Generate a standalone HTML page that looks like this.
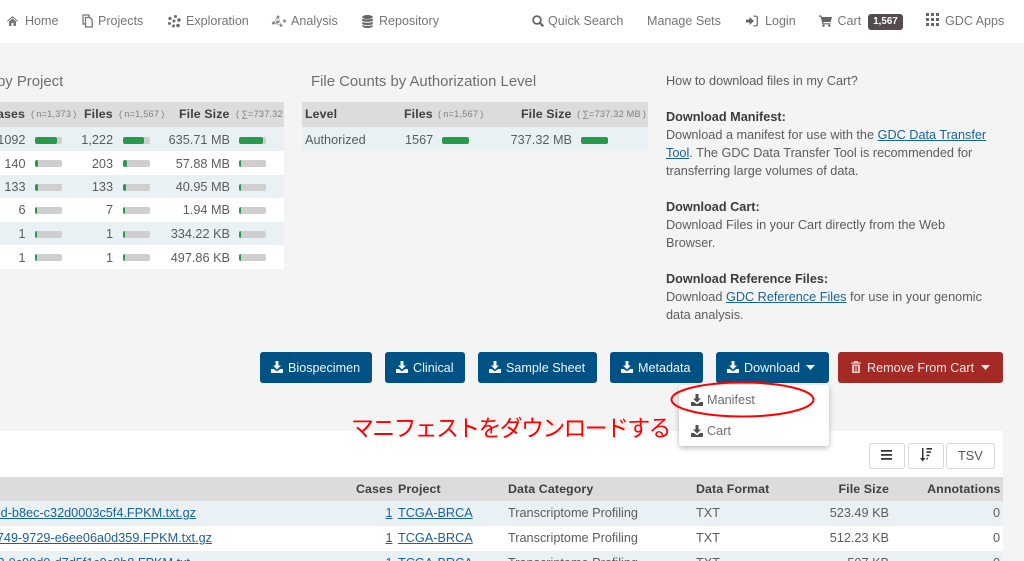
<!DOCTYPE html>
<html lang="ja"><head><meta charset="utf-8"><title>GDC Cart</title>
<style>
html,body{margin:0;padding:0;width:1024px;height:561px;overflow:hidden}
#w{position:relative;width:1024px;height:561px;overflow:hidden;background:#f4f4f4;font-family:"Liberation Sans","Noto Sans CJK JP",sans-serif;font-size:12.7px;color:#5c5c5c}
.b{position:absolute}
.t{position:absolute;white-space:nowrap;line-height:18px}
.n{color:#757575;font-size:12.55px;top:12px}
.h{font-weight:bold;color:#3f3f3f;font-size:12.4px;letter-spacing:.1px}
.s{font-size:9.2px;color:#808080;letter-spacing:.2px}
.R{text-align:right}
a{color:#1a6296;text-decoration:underline}
.bar{position:absolute;width:27px;height:7px;background:#cfcfcf;border-radius:2px;overflow:hidden}
.bar i{display:block;height:7px;background:#259b4b;border-radius:2px}
.btn{position:absolute;top:352px;height:31px;background:#005184;border-radius:3px}
.bl{position:absolute;top:358.5px;color:#f3f6f9;font-size:12.6px;line-height:18px;white-space:nowrap}
svg{position:absolute;overflow:visible}
.tb{position:absolute;top:443px;height:24px;background:#fff;border:1px solid #d8d8d8;border-radius:3px}
</style></head><body><div id="w">
<div class="b" style="left:205px;top:-6px;width:355px;height:6px;box-shadow:0 1px 4px rgba(0,0,0,.12)"></div>
<div class="b" style="left:0;top:0;width:1024px;height:43px;background:#fff"></div>

<svg style="left:7px;top:16px" width="11" height="10" viewBox="0 0 11 10" fill="#757575"><path d="M5.500 0 11 5l-.7.7L5.500 1.500.7 5.700 0 5zM2 5.500 5.500 2.500 9 5.500V10H6.500V7h-2v3H2z"/></svg>
<span class="t n" style="left:25px">Home</span>
<svg style="left:82px;top:14px" width="11" height="14" viewBox="0 0 11 14" fill="none" stroke="#757575" stroke-width="1.300"><path d="M7 3V1H1v9h2.500"/><path d="M3.500 3.500H8L10.200 6v7H3.500z"/></svg>
<span class="t n" style="left:98px">Projects</span>
<svg style="left:168px;top:15px" width="13" height="13" viewBox="0 0 13 13" fill="#6b6b6b"><circle cx="7.500" cy="1.500" r="1.500"/><circle cx="2" cy="3.500" r="1.600"/><circle cx="11" cy="5" r="1.800"/><circle cx="6" cy="6" r="1.500"/><circle cx="1.500" cy="8.500" r="1.500"/><circle cx="10" cy="10.500" r="1.800"/><circle cx="5.500" cy="11" r="1.500"/></svg>
<span class="t n" style="left:186px">Exploration</span>
<svg style="left:272px;top:15px" width="14" height="13" viewBox="0 0 14 13" fill="#777" stroke="#999" stroke-width=".7"><path d="M6 2 1.500 8 9 10.500 6 2z" fill="none"/><circle cx="6" cy="2" r="1.200"/><circle cx="1.500" cy="8" r="1.300"/><circle cx="9" cy="10.500" r="1.100"/><circle cx="12.500" cy="6" r="1.200"/><circle cx="5.500" cy="7" r="1.200"/></svg>
<span class="t n" style="left:291px">Analysis</span>
<svg style="left:362px;top:15px" width="11" height="13" viewBox="0 0 11 13" fill="#666"><ellipse cx="5.500" cy="2" rx="5.300" ry="2"/><path d="M.2 3.400c1 1.400 9.600 1.400 10.600 0v2.200c-1 1.600-9.600 1.600-10.600 0zM.2 6.700c1 1.400 9.600 1.400 10.600 0v2.200c-1 1.600-9.600 1.600-10.600 0zM.2 9.900c1 1.400 9.600 1.400 10.600 0v1.100c-1 2.700-9.600 2.700-10.600 0z"/></svg>
<span class="t n" style="left:379px">Repository</span>
<svg style="left:532px;top:15px" width="12" height="12" viewBox="0 0 12 12" fill="none" stroke="#666" stroke-width="1.800"><circle cx="5" cy="5" r="3.900"/><path d="M7.800 7.800 11.300 11.300" stroke-width="2.200"/></svg>
<span class="t n" style="left:548px">Quick Search</span>
<span class="t n" style="left:647px">Manage Sets</span>
<svg style="left:746px;top:15px" width="12" height="12" viewBox="0 0 12 12"><path d="M0 4.500h3.500V2L8 6l-4.500 4V7.500H0z" fill="#666"/><path d="M7.500 1.200H10a1.300 1.300 0 0 1 1.300 1.300v7A1.300 1.300 0 0 1 10 10.800H7.500" fill="none" stroke="#666" stroke-width="1.200"/></svg>
<span class="t n" style="left:765px">Login</span>
<svg style="left:819px;top:15px" width="13" height="12" viewBox="0 0 13 12" fill="#666"><path d="M0 .5h2.500l.4 1.500H13l-1.300 5H4.200l.3 1.200H11.500v1.200H3.400L1.700 1.700H0z"/><circle cx="4.500" cy="10.700" r="1.200"/><circle cx="10.300" cy="10.700" r="1.200"/></svg>
<span class="t n" style="left:837.500px">Cart</span>
<div class="b" style="left:868px;top:14px;width:35px;height:16px;background:#544c4c;border-radius:3px;color:#fff;font-size:9.800px;font-weight:bold;line-height:16px;text-align:center">1,567</div>
<svg style="left:926px;top:13px" width="13" height="13" viewBox="0 0 13 13" fill="#666"><path d="M0 0h3v3H0zM5 0h3v3H5zM10 0h3v3h-3zM0 5h3v3H0zM5 5h3v3H5zM10 5h3v3h-3zM0 10h3v3H0zM5 10h3v3H5zM10 10h3v3h-3z"/></svg>
<span class="t n" style="left:945px">GDC Apps</span>

<!-- left table -->
<span class="t" style="left:-3px;top:73px;font-size:14.900px;color:#6e6e6e">by Project</span>
<div class="b" style="left:0;top:102px;width:284px;height:25px;background:#dcdcdc;overflow:hidden">
<span class="t h" style="right:259px;top:3px">Cases</span>
<span class="t s" style="left:31px;top:3px">(&thinsp;n=1,373&thinsp;)</span>
<span class="t h" style="left:84px;top:3px">Files</span>
<span class="t s" style="left:119px;top:3px">(&thinsp;n=1,567&thinsp;)</span>
<span class="t h" style="left:179px;top:3px">File Size</span>
<span class="t s" style="left:236px;top:3px">(&thinsp;∑=737.32 MB&thinsp;)</span>
</div>
<div class="b" style="left:0;top:127px;width:284px;height:24px;background:#e9f1f5"></div>
<div class="b" style="left:0;top:151px;width:284px;height:24px;background:#fff"></div>
<div class="b" style="left:0;top:175px;width:284px;height:23px;background:#e9f1f5"></div>
<div class="b" style="left:0;top:198px;width:284px;height:24px;background:#fff"></div>
<div class="b" style="left:0;top:222px;width:284px;height:23px;background:#e9f1f5"></div>
<div class="b" style="left:0;top:245px;width:284px;height:24px;background:#fff"></div>

<span class="t R" style="right:998.500px;top:131px">1092</span>
<span class="t R" style="right:998.500px;top:155px">140</span>
<span class="t R" style="right:998.500px;top:178px">133</span>
<span class="t R" style="right:998.500px;top:201px">6</span>
<span class="t R" style="right:998.500px;top:225px">1</span>
<span class="t R" style="right:998.500px;top:249px">1</span>

<span class="t R" style="right:911px;top:131px">1,222</span>
<span class="t R" style="right:911px;top:155px">203</span>
<span class="t R" style="right:911px;top:178px">133</span>
<span class="t R" style="right:911px;top:201px">7</span>
<span class="t R" style="right:911px;top:225px">1</span>
<span class="t R" style="right:911px;top:249px">1</span>

<span class="t R" style="right:794px;top:131px">635.71 MB</span>
<span class="t R" style="right:794px;top:155px">57.88 MB</span>
<span class="t R" style="right:794px;top:178px">40.95 MB</span>
<span class="t R" style="right:794px;top:201px">1.94 MB</span>
<span class="t R" style="right:794px;top:225px">334.22 KB</span>
<span class="t R" style="right:794px;top:249px">497.86 KB</span>

<div class="bar" style="left:35px;top:136.500px"><i style="width:22px"></i></div>
<div class="bar" style="left:123px;top:136.500px"><i style="width:21px"></i></div>
<div class="bar" style="left:239px;top:136.500px"><i style="width:24px"></i></div>
<div class="bar" style="left:35px;top:160px"><i style="width:3px"></i></div>
<div class="bar" style="left:123px;top:160px"><i style="width:4px"></i></div>
<div class="bar" style="left:239px;top:160px"><i style="width:2px"></i></div>
<div class="bar" style="left:35px;top:184px"><i style="width:3px"></i></div>
<div class="bar" style="left:123px;top:184px"><i style="width:3px"></i></div>
<div class="bar" style="left:239px;top:184px"><i style="width:2px"></i></div>
<div class="bar" style="left:35px;top:207px"><i style="width:2px"></i></div>
<div class="bar" style="left:123px;top:207px"><i style="width:2px"></i></div>
<div class="bar" style="left:239px;top:207px"><i style="width:2px"></i></div>
<div class="bar" style="left:35px;top:231px"><i style="width:2px"></i></div>
<div class="bar" style="left:123px;top:231px"><i style="width:2px"></i></div>
<div class="bar" style="left:239px;top:231px"><i style="width:2px"></i></div>
<div class="bar" style="left:35px;top:254px"><i style="width:2px"></i></div>
<div class="bar" style="left:123px;top:254px"><i style="width:2px"></i></div>
<div class="bar" style="left:239px;top:254px"><i style="width:2px"></i></div>

<!-- middle table -->
<span class="t" style="left:311px;top:73px;font-size:14.900px;color:#6e6e6e">File Counts by Authorization Level</span>
<div class="b" style="left:302px;top:102px;width:346px;height:25px;background:#dcdcdc"></div>
<span class="t h" style="left:305px;top:105px">Level</span>
<span class="t h" style="left:404px;top:105px">Files</span>
<span class="t s" style="left:438px;top:105px">(&thinsp;n=1,567&thinsp;)</span>
<span class="t h" style="left:521px;top:105px">File Size</span>
<span class="t s" style="left:577px;top:105px">(&thinsp;∑=737.32 MB&thinsp;)</span>
<div class="b" style="left:302px;top:127px;width:346px;height:24px;background:#e9f1f5"></div>
<span class="t" style="left:305px;top:131px">Authorized</span>
<span class="t" style="left:405px;top:131px">1567</span>
<span class="t R" style="right:452px;top:131px">737.32 MB</span>
<div class="bar" style="left:442px;top:136.500px"><i style="width:27px"></i></div>
<div class="bar" style="left:581px;top:136.500px"><i style="width:27px"></i></div>

<!-- help text -->
<span class="t" style="left:666px;top:72px">How to download files in my Cart?</span>
<span class="t" style="left:666px;top:108px;font-weight:bold;color:#3c3c3c">Download Manifest:</span>
<span class="t" style="left:666px;top:126px">Download a manifest for use with the <a>GDC Data Transfer</a></span>
<span class="t" style="left:666px;top:144px"><a>Tool</a>. The GDC Data Transfer Tool is recommended for</span>
<span class="t" style="left:666px;top:162px">transferring large volumes of data.</span>
<span class="t" style="left:666px;top:198px;font-weight:bold;color:#3c3c3c">Download Cart:</span>
<span class="t" style="left:666px;top:216px">Download Files in your Cart directly from the Web</span>
<span class="t" style="left:666px;top:234px">Browser.</span>
<span class="t" style="left:666px;top:270px;font-weight:bold;color:#3c3c3c">Download Reference Files:</span>
<span class="t" style="left:666px;top:288px">Download <a>GDC Reference Files</a> for use in your genomic</span>
<span class="t" style="left:666px;top:306px">data analysis.</span>

<!-- buttons -->
<div class="btn" style="left:259.500px;width:112.500px"></div>
<div class="btn" style="left:384.500px;width:80.500px"></div>
<div class="btn" style="left:477.500px;width:119.500px"></div>
<div class="btn" style="left:609.500px;width:93.500px"></div>
<div class="btn" style="left:715.500px;width:113px"></div>
<div class="btn" style="left:837.500px;width:165.500px;background:#a42a25"></div>

<svg style="left:271px;top:361px" width="12" height="12" viewBox="0 0 12 12" fill="#f3f6f9"><path d="M4.500 0h3v4.500H10L6 8.500 2 4.500h2.500zM0 8h2.800L6 10.300 9.200 8H12v4H0z"/></svg>
<span class="bl" style="left:288px">Biospecimen</span>
<svg style="left:396px;top:361px" width="12" height="12" viewBox="0 0 12 12" fill="#f3f6f9"><path d="M4.500 0h3v4.500H10L6 8.500 2 4.500h2.500zM0 8h2.800L6 10.300 9.200 8H12v4H0z"/></svg>
<span class="bl" style="left:413px">Clinical</span>
<svg style="left:489px;top:361px" width="12" height="12" viewBox="0 0 12 12" fill="#f3f6f9"><path d="M4.500 0h3v4.500H10L6 8.500 2 4.500h2.500zM0 8h2.800L6 10.300 9.200 8H12v4H0z"/></svg>
<span class="bl" style="left:506px">Sample Sheet</span>
<svg style="left:621px;top:361px" width="12" height="12" viewBox="0 0 12 12" fill="#f3f6f9"><path d="M4.500 0h3v4.500H10L6 8.500 2 4.500h2.500zM0 8h2.800L6 10.300 9.200 8H12v4H0z"/></svg>
<span class="bl" style="left:638px">Metadata</span>
<svg style="left:727px;top:361px" width="12" height="12" viewBox="0 0 12 12" fill="#f3f6f9"><path d="M4.500 0h3v4.500H10L6 8.500 2 4.500h2.500zM0 8h2.800L6 10.300 9.200 8H12v4H0z"/></svg>
<span class="bl" style="left:744px">Download</span>
<svg style="left:806px;top:365px" width="9" height="5" viewBox="0 0 9 5" fill="#f3f6f9"><path d="M0 0h9L4.500 5z"/></svg>
<svg style="left:851px;top:361px" width="10" height="12" viewBox="0 0 10 12" fill="#e6c4c2"><path d="M3 0h4l.5 1.500H10v1.200H0V1.500h2.500zM1 3.500h8V12H1zM3 5v5.500h.8V5zM4.600 5v5.500h.8V5zM6.200 5v5.500H7V5z" fill-rule="evenodd"/></svg>
<span class="bl" style="left:867px;color:#f5e6e5">Remove From Cart</span>
<svg style="left:981px;top:365px" width="9" height="5" viewBox="0 0 9 5" fill="#f5e6e5"><path d="M0 0h9L4.500 5z"/></svg>

<!-- bottom panel -->
<div class="b" style="left:0;top:431px;width:1003px;height:130px;background:#fff"></div>
<div class="tb" style="left:868.500px;width:34px"></div>
<svg style="left:881px;top:450px" width="11" height="10" viewBox="0 0 11 10" fill="#333"><path d="M0 0h11v1.800H0zM0 4h11v1.800H0zM0 8h11v1.800H0z"/></svg>
<div class="tb" style="left:907.500px;width:34px"></div>
<svg style="left:920px;top:448px" width="12" height="14" viewBox="0 0 12 14" fill="#333"><path d="M2 0h1.500v10H5.500L2.750 13.500 0 10h2zM6.500 0H12v1.600H6.500zM6.500 3.300H11v1.600H6.500zM6.500 6.600H9.500v1.600H6.500zM6.500 9.900H8v1.600H6.500z"/></svg>
<div class="tb" style="left:946px;width:47px"></div>
<span class="t" style="left:958px;top:446.500px;color:#555">TSV</span>

<div class="b" style="left:0;top:477px;width:1003px;height:24px;background:#dcdcdc"></div>
<div class="b" style="left:0;top:501px;width:1003px;height:25px;background:#e9f1f5"></div>
<div class="b" style="left:0;top:551px;width:1003px;height:10px;background:#e9f1f5"></div>

<span class="t h R" style="right:631px;top:480px">Cases</span>
<span class="t h" style="left:398px;top:480px">Project</span>
<span class="t h" style="left:508px;top:480px">Data Category</span>
<span class="t h" style="left:696px;top:480px">Data Format</span>
<span class="t h R" style="right:135px;top:480px">File Size</span>
<span class="t h R" style="right:23.500px;top:480px">Annotations</span>

<span class="t" style="right:828px;top:504px"><a>7d-b8ec-c32d0003c5f4.FPKM.txt.gz</a></span>
<span class="t R" style="right:631.500px;top:504px"><a>1</a></span>
<span class="t" style="left:398px;top:504px"><a>TCGA-BRCA</a></span>
<span class="t" style="left:508px;top:504px">Transcriptome Profiling</span>
<span class="t" style="left:696px;top:504px">TXT</span>
<span class="t R" style="right:135px;top:504px">523.49 KB</span>
<span class="t R" style="right:24px;top:504px">0</span>

<span class="t" style="right:812px;top:529px"><a>749-9729-e6ee06a0d359.FPKM.txt.gz</a></span>
<span class="t R" style="right:631.500px;top:529px"><a>1</a></span>
<span class="t" style="left:398px;top:529px"><a>TCGA-BRCA</a></span>
<span class="t" style="left:508px;top:529px">Transcriptome Profiling</span>
<span class="t" style="left:696px;top:529px">TXT</span>
<span class="t R" style="right:135px;top:529px">512.23 KB</span>
<span class="t R" style="right:24px;top:529px">0</span>

<span class="t" style="right:834px;top:554px"><a>3-9c90d0-d7d5f1c9c0b8.FPKM.txt</a></span>
<span class="t R" style="right:631.500px;top:554px"><a>1</a></span>
<span class="t" style="left:398px;top:554px"><a>TCGA-BRCA</a></span>
<span class="t" style="left:508px;top:554px">Transcriptome Profiling</span>
<span class="t" style="left:696px;top:554px">TXT</span>
<span class="t R" style="right:135px;top:554px">507 KB</span>
<span class="t R" style="right:24px;top:554px">0</span>

<!-- dropdown -->
<div class="b" style="left:679px;top:385px;width:150px;height:61px;background:#fff;border-radius:3px;box-shadow:0 2px 6px rgba(0,0,0,.28)"></div>
<svg style="left:691px;top:394px" width="12" height="12" viewBox="0 0 12 12" fill="#4f4f4f"><path d="M4.500 0h3v4.500H10L6 8.500 2 4.500h2.500zM0 8h2.800L6 10.300 9.200 8H12v4H0z"/></svg>
<span class="t" style="left:707px;top:391px;color:#6c6c6c">Manifest</span>
<svg style="left:691px;top:425px" width="12" height="12" viewBox="0 0 12 12" fill="#4f4f4f"><path d="M4.500 0h3v4.500H10L6 8.500 2 4.500h2.500zM0 8h2.800L6 10.300 9.200 8H12v4H0z"/></svg>
<span class="t" style="left:707px;top:422px;color:#6c6c6c">Cart</span>

<!-- annotation -->
<svg style="left:0;top:0" width="1024" height="561" viewBox="0 0 1024 561"><ellipse cx="742.500" cy="399.500" rx="71" ry="17" fill="none" stroke="#f00" stroke-width="2"/></svg>
<span class="t" style="left:351px;top:411px;font-size:23px;letter-spacing:-1.750px;line-height:30px;color:#f00;font-family:'Noto Sans CJK JP','Liberation Sans',sans-serif">マニフェストをダウンロードする</span>
</div></body></html>
